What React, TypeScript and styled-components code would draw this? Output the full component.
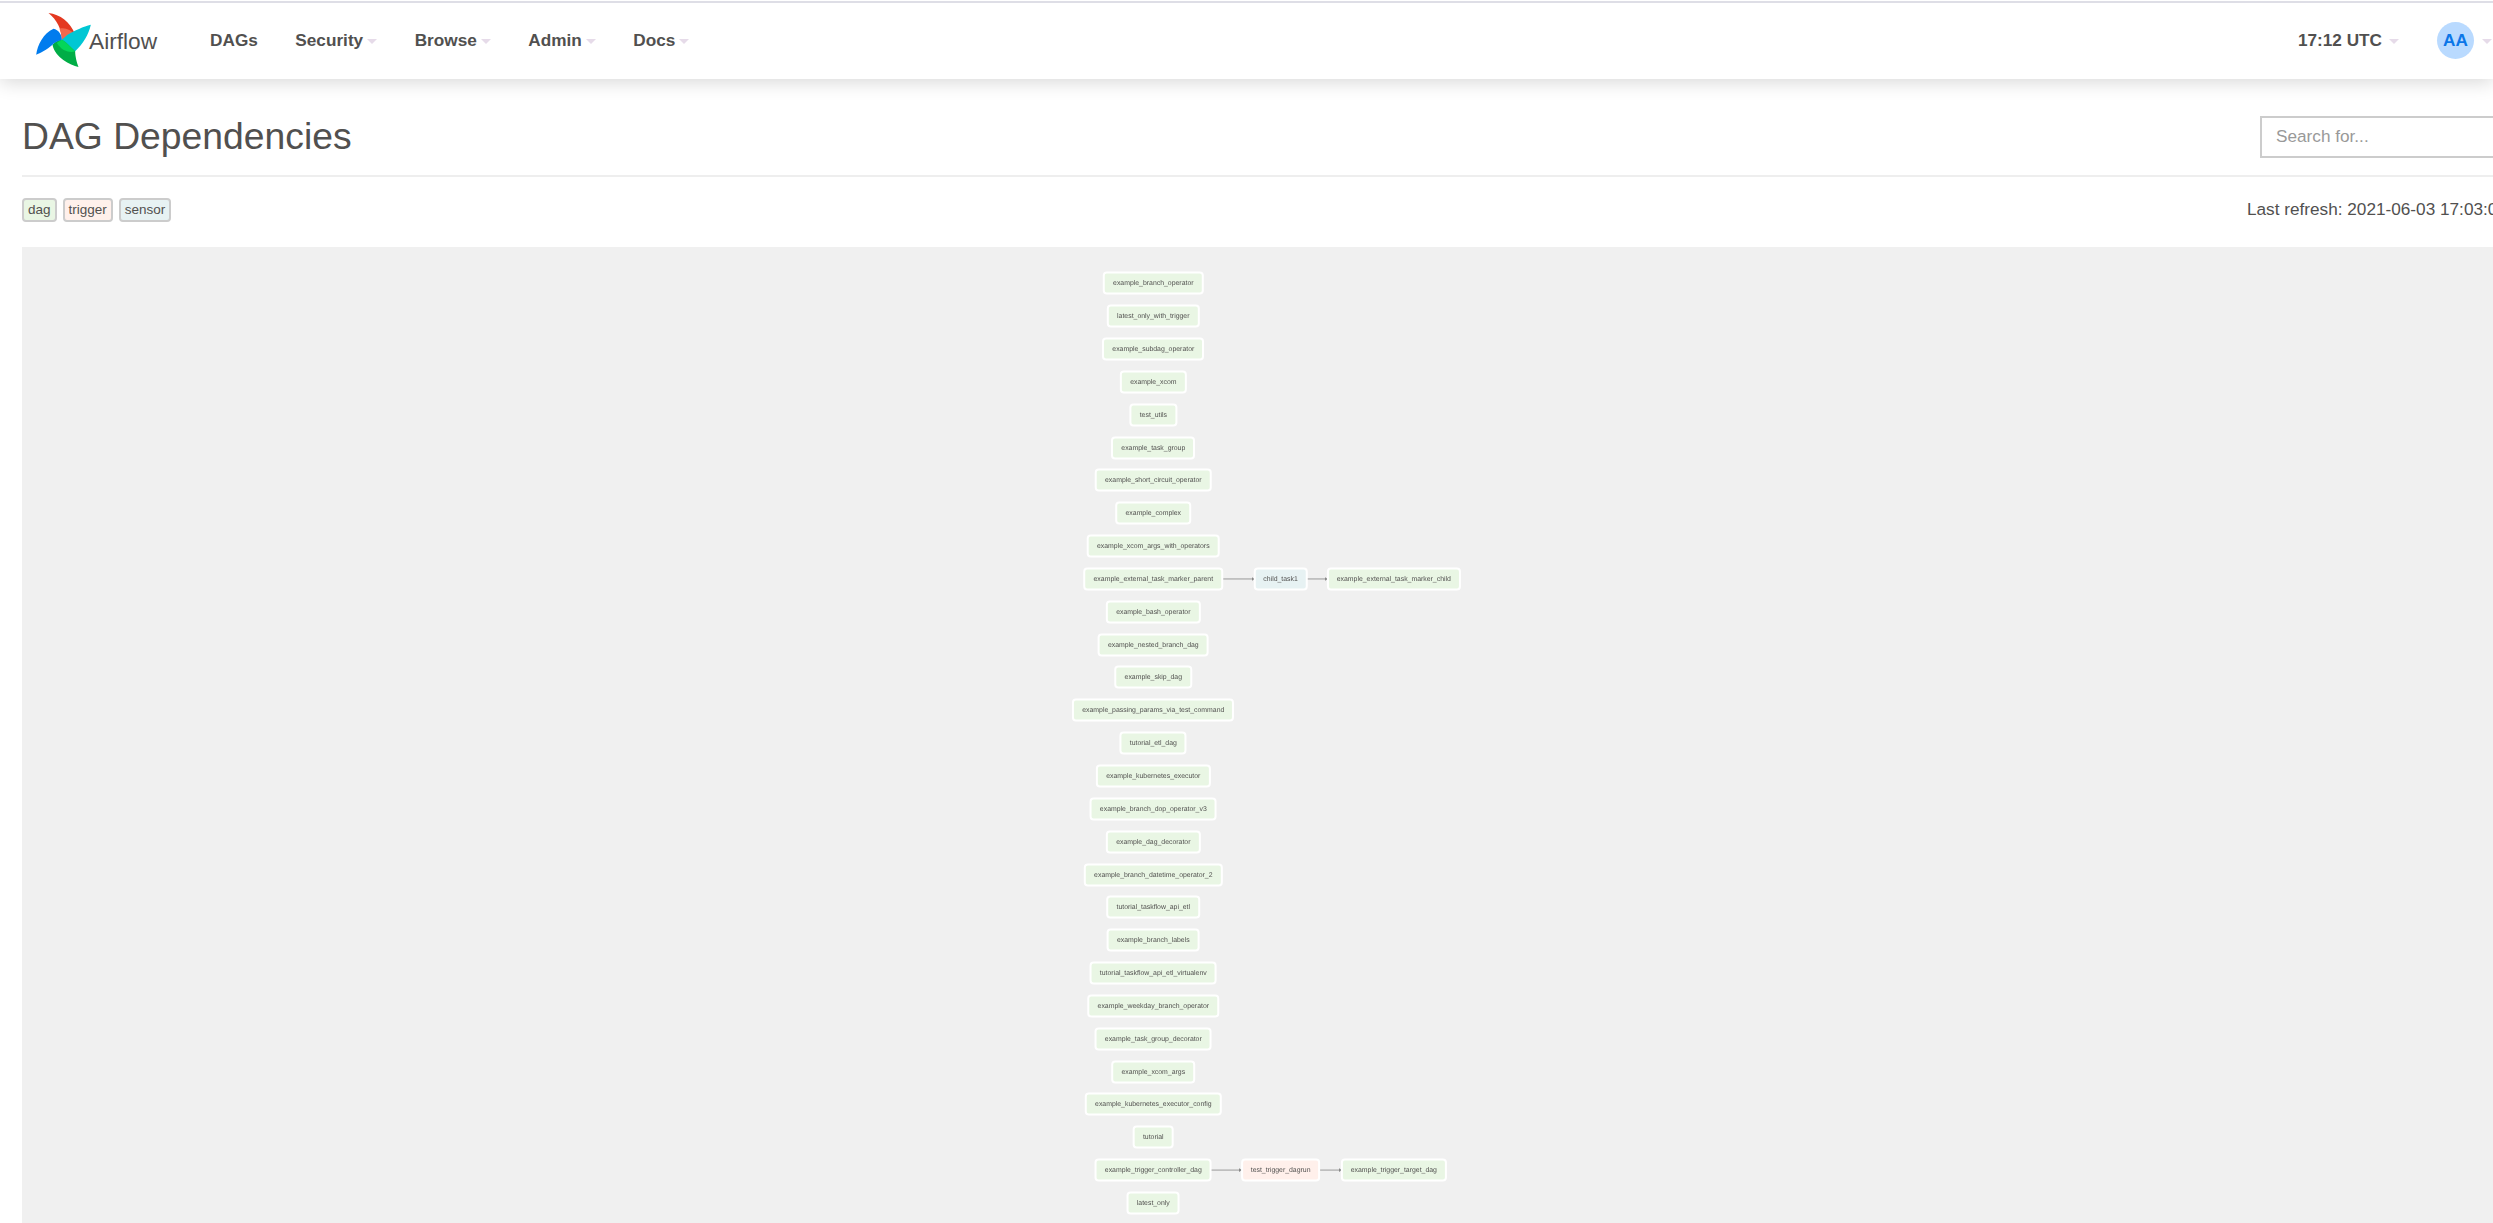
import styled, { createGlobalStyle } from 'styled-components';

const GlobalStyle = createGlobalStyle`
  html, body {
    margin: 0;
    padding: 0;
    overflow: hidden;
    background: #fff;
  }
  body {
    font-family: 'Liberation Sans', Arial, sans-serif;
    color: #51504f;
  }
`;

const Page = styled.div`
  width: 2493px;
  height: 1223px;
  overflow: hidden;
`;

const Navbar = styled.nav`
  position: relative;
  z-index: 2;
  box-sizing: border-box;
  height: 79px;
  display: flex;
  align-items: center;
  justify-content: space-between;
  padding: 0 1px 0 36px;
  background: #fff;
  border-top: 1px solid #fff;
  box-shadow: inset 0 2px 0 #dedee6, 0 3px 18px rgba(0, 0, 0, 0.16);
`;

const NavLeft = styled.div`
  display: flex;
  align-items: center;
`;

const Brand = styled.a`
  display: flex;
  align-items: center;
  margin-right: 53px;
`;

const BrandName = styled.span`
  font-size: 22.7px;
  color: #51504f;
  margin-left: -2px;
  margin-top: 3px;
`;

const NavLinks = styled.div`
  display: flex;
  align-items: center;
  gap: 37.5px;
`;

const NavLink = styled.a`
  display: flex;
  align-items: center;
  gap: 4px;
  font-size: 17.2px;
  font-weight: 700;
  color: #51504f;
`;

const Caret = styled.span`
  display: inline-block;
  width: 0;
  height: 0;
  margin-top: 2px;
  border-top: 5px solid #e6dbe9;
  border-left: 5px solid transparent;
  border-right: 5px solid transparent;
`;

const NavRight = styled.div`
  display: flex;
  align-items: center;
`;

const Clock = styled.a`
  display: flex;
  align-items: center;
  gap: 7px;
  font-size: 17.2px;
  font-weight: 700;
  color: #51504f;
  margin-right: 38px;
`;

const UserMenu = styled.a`
  display: flex;
  align-items: center;
  gap: 8px;
`;

const Avatar = styled.span`
  width: 37px;
  height: 37px;
  border-radius: 50%;
  background: #b9daff;
  color: #0b76e8;
  font-size: 17.2px;
  font-weight: 700;
  display: flex;
  align-items: center;
  justify-content: center;
`;

const Main = styled.main`
  width: 2622px;
  box-sizing: border-box;
  padding: 0 22px;
`;

const PageHeader = styled.header`
  height: 98px;
  box-sizing: border-box;
  display: flex;
  align-items: center;
  justify-content: space-between;
  border-bottom: 2px solid #eee;
  padding-top: 20px;
`;

const Title = styled.h1`
  margin: 0 0 1px;
  font-size: 37.3px;
  font-weight: 400;
  color: #51504f;
`;

const SearchInput = styled.input`
  box-sizing: border-box;
  width: 340px;
  height: 42px;
  padding: 0 14px 1px;
  border: 2px solid #ccc;
  border-radius: 0;
  font-family: inherit;
  font-size: 17.2px;
  &::placeholder {
    color: #999;
  }
`;

const LegendBar = styled.div`
  height: 70px;
  display: flex;
  align-items: center;
  justify-content: space-between;
  padding-bottom: 5px;
  box-sizing: border-box;
`;

const Legend = styled.div`
  display: flex;
  gap: 6px;
`;

const LegendItem = styled.span<{ $fill: string }>`
  box-sizing: border-box;
  height: 24px;
  padding: 0 4px;
  display: flex;
  align-items: center;
  border: 2px solid #ccc;
  border-radius: 4px;
  background: ${p => p.$fill};
  font-size: 13.5px;
  color: #51504f;
`;

const Refresh = styled.span`
  font-size: 17.2px;
  color: #51504f;
  margin-right: 53px;
`;

const Graph = styled.section`
  position: relative;
  height: 1000px;
  background: #f0f0f0;
  overflow: hidden;
`;

const Edges = styled.svg`
  position: absolute;
  top: 0;
  left: 0;
  width: 100%;
  height: 100%;
`;

const Node = styled.div<{ $fill: string }>`
  position: absolute;
  box-sizing: border-box;
  height: 23px;
  padding: 0 8px;
  display: flex;
  align-items: center;
  transform: translate(-50%, -50%);
  white-space: nowrap;
  border: 2px solid #fff;
  border-radius: 4px;
  background: ${p => p.$fill};
  font-size: 6.9px;
  color: #51504f;
  text-rendering: geometricPrecision;
  filter: blur(0.3px);
`;

const GREEN = '#e9f6e4';
const RED = '#fff0eb';
const BLUE = '#e7f2f3';

const FIRST = 1153.3 - 22;
const SECOND = 1280.6 - 22;
const THIRD = 1393.8 - 22;
const rowY = (row: number) => 283.4 + 32.84 * row - 247;

const dags = [
  'example_branch_operator',
  'latest_only_with_trigger',
  'example_subdag_operator',
  'example_xcom',
  'test_utils',
  'example_task_group',
  'example_short_circuit_operator',
  'example_complex',
  'example_xcom_args_with_operators',
  'example_external_task_marker_parent',
  'example_bash_operator',
  'example_nested_branch_dag',
  'example_skip_dag',
  'example_passing_params_via_test_command',
  'tutorial_etl_dag',
  'example_kubernetes_executor',
  'example_branch_dop_operator_v3',
  'example_dag_decorator',
  'example_branch_datetime_operator_2',
  'tutorial_taskflow_api_etl',
  'example_branch_labels',
  'tutorial_taskflow_api_etl_virtualenv',
  'example_weekday_branch_operator',
  'example_task_group_decorator',
  'example_xcom_args',
  'example_kubernetes_executor_config',
  'tutorial',
  'example_trigger_controller_dag',
  'latest_only',
];

const extraNodes = [
  { name: 'child_task1', row: 9, x: SECOND, fill: BLUE },
  { name: 'example_external_task_marker_child', row: 9, x: THIRD, fill: GREEN },
  { name: 'test_trigger_dagrun', row: 27, x: SECOND, fill: RED },
  { name: 'example_trigger_target_dag', row: 27, x: THIRD, fill: GREEN },
];

const edges = [
  { row: 9, from: 1222, to: 1255 },
  { row: 9, from: 1306, to: 1328 },
  { row: 27, from: 1211, to: 1242 },
  { row: 27, from: 1319, to: 1342 },
];

function Pinwheel() {
  return (
    <svg width="55" height="54" viewBox="48 35 164 162">
      <path d="M85 35C120 40 150 60 165 100C160 110 145 118 125 115C125 85 110 55 85 35Z" fill="#e43921" />
      <path d="M165 100C160 110 145 118 125 115C125 105 122 92 118 82C135 78 152 85 165 100Z" fill="#f2694f" />
      <path d="M212 70C190 75 163 88 142 100C135 106 128 112 125 115C130 130 150 148 165 150C190 125 205 100 212 70Z" fill="#00c7d4" />
      <path d="M175 197C150 190 105 170 97 130C105 120 118 115 125 115C135 120 150 135 165 150C165 165 170 185 175 197Z" fill="#00ad46" />
      <path d="M125 115C135 120 150 135 165 150C150 155 125 150 110 125C115 120 120 116 125 115Z" fill="#04d659" />
      <path d="M48 160C52 130 70 95 100 82C115 85 125 100 125 115C110 120 100 125 97 130C80 145 60 155 48 160Z" fill="#017cee" />
    </svg>
  );
}

export default function App() {
  return (
    <Page>
      <GlobalStyle />
      <Navbar>
        <NavLeft>
          <Brand>
            <Pinwheel />
            <BrandName>Airflow</BrandName>
          </Brand>
          <NavLinks>
            <NavLink>DAGs</NavLink>
            <NavLink>Security<Caret /></NavLink>
            <NavLink>Browse<Caret /></NavLink>
            <NavLink>Admin<Caret /></NavLink>
            <NavLink>Docs<Caret /></NavLink>
          </NavLinks>
        </NavLeft>
        <NavRight>
          <Clock>17:12 UTC<Caret /></Clock>
          <UserMenu>
            <Avatar>AA</Avatar>
            <Caret />
          </UserMenu>
        </NavRight>
      </Navbar>
      <Main>
        <PageHeader>
          <Title>DAG Dependencies</Title>
          <SearchInput placeholder="Search for..." />
        </PageHeader>
        <LegendBar>
          <Legend>
            <LegendItem $fill={GREEN}>dag</LegendItem>
            <LegendItem $fill={RED}>trigger</LegendItem>
            <LegendItem $fill={BLUE}>sensor</LegendItem>
          </Legend>
          <Refresh>Last refresh: 2021-06-03 17:03:08 UTC</Refresh>
        </LegendBar>
        <Graph>
          <Edges>
            {edges.map(e => {
              const y = rowY(e.row);
              const from = e.from - 22;
              const to = e.to - 22;
              return (
                <g key={`${e.row}-${e.from}`}>
                  <line x1={from} y1={y} x2={to - 2} y2={y} stroke="#999" strokeWidth="1" />
                  <path d={`M${to - 3} ${y - 1.8}L${to} ${y}L${to - 3} ${y + 1.8}Z`} fill="#888" />
                </g>
              );
            })}
          </Edges>
          {dags.map((name, row) => (
            <Node key={name} $fill={GREEN} style={{ left: FIRST, top: rowY(row) }}>{name}</Node>
          ))}
          {extraNodes.map(n => (
            <Node key={n.name} $fill={n.fill} style={{ left: n.x, top: rowY(n.row) }}>{n.name}</Node>
          ))}
        </Graph>
      </Main>
    </Page>
  );
}
